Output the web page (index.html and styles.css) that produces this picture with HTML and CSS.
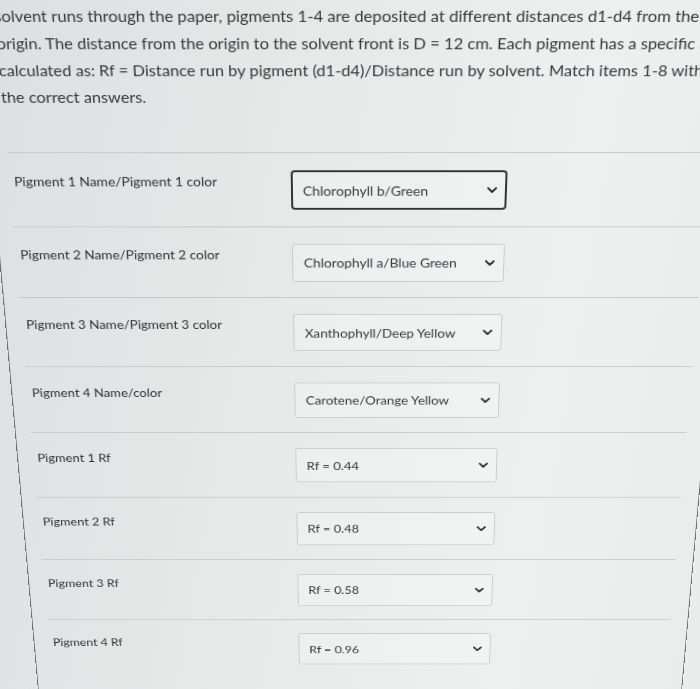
FILE: index.html
```html
<!DOCTYPE html>
<html lang="en">
<head>
<meta charset="utf-8">
<title>Matching question</title>
<link rel="stylesheet" href="styles.css">
</head>
<body>
<div class="page">
  <div class="card">
    <p class="question-text">solvent runs through the paper, pigments 1-4 are deposited at different distances d1-d4 from the<br>origin. The distance from the origin to the solvent front is D = 12 cm. Each pigment has a specific Rf<br>calculated as: Rf = Distance run by pigment (d1-d4)/Distance run by solvent. Match items 1-8 with<br>the correct answers.</p>
    <div class="answers">
      <div class="row">
        <div class="label">Pigment 1 Name/Pigment 1 color</div>
        <div class="select focused"><span class="value">Chlorophyll b/Green</span><svg class="chev" viewBox="0 0 10 6"><path d="M1 1 L5 5 L9 1"/></svg></div>
      </div>
      <div class="row">
        <div class="label">Pigment 2 Name/Pigment 2 color</div>
        <div class="select"><span class="value">Chlorophyll a/Blue Green</span><svg class="chev" viewBox="0 0 10 6"><path d="M1 1 L5 5 L9 1"/></svg></div>
      </div>
      <div class="row">
        <div class="label">Pigment 3 Name/Pigment 3 color</div>
        <div class="select"><span class="value">Xanthophyll/Deep Yellow</span><svg class="chev" viewBox="0 0 10 6"><path d="M1 1 L5 5 L9 1"/></svg></div>
      </div>
      <div class="row">
        <div class="label">Pigment 4 Name/color</div>
        <div class="select"><span class="value">Carotene/Orange Yellow</span><svg class="chev" viewBox="0 0 10 6"><path d="M1 1 L5 5 L9 1"/></svg></div>
      </div>
      <div class="row">
        <div class="label">Pigment 1 Rf</div>
        <div class="select"><span class="value">Rf = 0.44</span><svg class="chev" viewBox="0 0 10 6"><path d="M1 1 L5 5 L9 1"/></svg></div>
      </div>
      <div class="row">
        <div class="label">Pigment 2 Rf</div>
        <div class="select"><span class="value">Rf = 0.48</span><svg class="chev" viewBox="0 0 10 6"><path d="M1 1 L5 5 L9 1"/></svg></div>
      </div>
      <div class="row">
        <div class="label">Pigment 3 Rf</div>
        <div class="select"><span class="value">Rf = 0.58</span><svg class="chev" viewBox="0 0 10 6"><path d="M1 1 L5 5 L9 1"/></svg></div>
      </div>
      <div class="row">
        <div class="label">Pigment 4 Rf</div>
        <div class="select"><span class="value">Rf = 0.96</span><svg class="chev" viewBox="0 0 10 6"><path d="M1 1 L5 5 L9 1"/></svg></div>
      </div>
    </div>
  </div>
</div>
</body>
</html>
```

FILE: styles.css
```css
html, body {
  margin: 0;
  padding: 0;
  width: 700px;
  height: 689px;
  overflow: hidden;
}

body {
  background: linear-gradient(100deg, #dde0e0 0%, #e8eaea 45%, #eef0f0 75%, #eaecec 100%);
  font-family: Lato, "Open Sans", sans-serif;
  color: #34383b;
}

.page {
  width: 700px;
  transform-origin: 360px 152px;
  transform: perspective(1114px) rotateX(-15deg);
}

.card {
  box-sizing: border-box;
  width: 744px;
  margin: -20px 0 0 -12px;
  padding: 20px 19px 60px 16px;
  border: 1px solid #6c7072;
}

.question-text {
  margin: 0 0 0 -1px;
  font-size: 16.2px;
  line-height: 27px;
  white-space: nowrap;
  color: #35393c;
}

.answers {
  margin-top: 44px;
}

.row {
  display: flex;
  align-items: flex-start;
  border-top: 1px solid #c3c7c9;
  padding: 0 0 17.6px 5px;
}

.label {
  flex: 0 0 280px;
  padding-top: 21px;
  font-size: 14px;
  line-height: 18px;
  color: #303336;
}

.select {
  box-sizing: border-box;
  flex: 0 0 219px;
  height: 42px;
  margin-top: 18px;
  display: flex;
  align-items: center;
  justify-content: space-between;
  padding: 0 9px 0 11px;
  border: 1px solid #c6cacc;
  border-radius: 3px;
  background: rgba(255, 255, 255, 0.22);
  font-size: 14.2px;
  color: #35393c;
}

.select.focused {
  border: 2px solid #2f3234;
  border-radius: 4px;
  padding-left: 10px;
  padding-right: 8px;
}

.chev {
  width: 10px;
  height: 6px;
  fill: none;
  stroke: #2f3234;
  stroke-width: 2;
  stroke-linecap: round;
  stroke-linejoin: round;
}
```
